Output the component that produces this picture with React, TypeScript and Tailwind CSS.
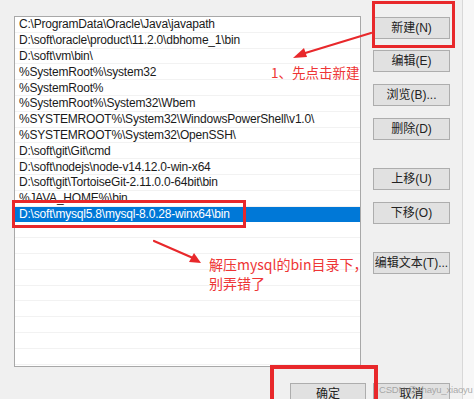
import React from 'react';

const paths = [
  'C:\\ProgramData\\Oracle\\Java\\javapath',
  'D:\\soft\\oracle\\product\\11.2.0\\dbhome_1\\bin',
  'D:\\soft\\vm\\bin\\',
  '%SystemRoot%\\system32',
  '%SystemRoot%',
  '%SystemRoot%\\System32\\Wbem',
  '%SYSTEMROOT%\\System32\\WindowsPowerShell\\v1.0\\',
  '%SYSTEMROOT%\\System32\\OpenSSH\\',
  'D:\\soft\\git\\Git\\cmd',
  'D:\\soft\\nodejs\\node-v14.12.0-win-x64',
  'D:\\soft\\git\\TortoiseGit-2.11.0.0-64bit\\bin',
  '%JAVA_HOME%\\bin',
  'D:\\soft\\mysql5.8\\mysql-8.0.28-winx64\\bin',
];

const SELECTED = 12;
const rows = [...paths, ...Array(9).fill('')];

function Btn({ label, className = '' }: { label: string; className?: string }) {
  return (
    <div
      className={`h-[22px] w-[77px] flex items-center justify-center bg-[#e1e1e1] border border-[#adadad] text-[12px] text-[#222] whitespace-nowrap ${className}`}
    >
      {label}
    </div>
  );
}

export default function App() {
  return (
    <div
      className="relative w-[474px] h-[399px] overflow-hidden flex bg-[#f0f0f0]"
      style={{ fontFamily: '"Liberation Sans", "Noto Sans CJK SC", sans-serif' }}
    >
      {/* dialog body */}
      <div className="w-[463px] shrink-0 border-r border-[#d8d8d8] flex flex-col">
        <div className="flex pt-4 pl-[14px]">
          {/* path list */}
          <div className="w-[347px] h-[351px] border border-[#a8a8a8] bg-white overflow-hidden">
            {rows.map((p, i) => (
              <div
                key={i}
                className={`h-[15.8px] pl-1 flex items-center text-[12px] tracking-[-0.2px] leading-none whitespace-nowrap border-b ${
                  i === SELECTED
                    ? 'bg-[#0078d7] text-white border-[#0078d7]'
                    : 'text-[#1a1a1a] border-[#f2f2f2]'
                }`}
              >
                {p}
              </div>
            ))}
          </div>

          {/* side buttons */}
          <div className="ml-3 pt-px flex flex-col">
            <Btn label="新建(N)" />
            <Btn label="编辑(E)" className="mt-[11px]" />
            <Btn label="浏览(B)..." className="mt-3" />
            <Btn label="删除(D)" className="mt-3" />
            <Btn label="上移(U)" className="mt-7" />
            <Btn label="下移(O)" className="mt-3" />
            <Btn label="编辑文本(T)..." className="mt-7 text-[11.5px]" />
          </div>
        </div>

        {/* bottom buttons */}
        <div className="flex mt-4 pl-[290px] gap-[7px]">
          <div className="h-[22px] w-[76px] flex items-center justify-center bg-[#e1e1e1] border border-[#adadad] text-[12px] text-[#222]">
            确定
          </div>
          <div className="h-[22px] w-[77px] flex items-center justify-center bg-[#e1e1e1] border border-[#adadad] text-[12px] text-[#222]">
            取消
          </div>
        </div>
      </div>
      <div className="flex-1 bg-[#f7f7f7]" />

      {/* annotations */}
      <div className="absolute left-[372px] top-[1px] w-[83px] h-[47px] border-[3px] border-[#e8282b]" />
      <div className="absolute left-[12px] top-[200px] w-[234px] h-[28px] border-[3px] border-[#e8282b]" />
      <div className="absolute left-[270px] top-[365px] w-[108px] h-[40px] border-4 border-[#e8282b]" />

      <svg className="absolute inset-0" width="474" height="399" viewBox="0 0 474 399">
        <line x1="371" y1="33" x2="302" y2="54" stroke="#e8282b" strokeWidth="2.2" strokeLinecap="round" />
        <polygon points="293,58 304,48 307,57" fill="#e8282b" />
        <line x1="154" y1="241" x2="193" y2="258" stroke="#e8282b" strokeWidth="2.2" strokeLinecap="round" />
        <polygon points="201,263 189,262 194,253" fill="#e8282b" />
      </svg>

      <div
        className="absolute left-[271px] top-[62px] text-[13.5px] leading-[20px] text-[#ee3535] whitespace-nowrap"
        style={{ fontFamily: '"Noto Sans CJK SC", sans-serif' }}
      >
        1、先点击新建
      </div>
      <div
        className="absolute left-[209px] top-[255px] text-[14px] leading-[19px] text-[#ee3535] whitespace-nowrap"
        style={{ fontFamily: '"Noto Sans CJK SC", sans-serif' }}
      >
        解压mysql的bin目录下，
        <br />
        别弄错了
      </div>

      <div className="absolute left-[379px] top-[383px] text-[9.5px] tracking-[-0.2px] text-[#8a8a8a]/70 whitespace-nowrap">
        CSDN @shayu_xiaoyu
      </div>
    </div>
  );
}
